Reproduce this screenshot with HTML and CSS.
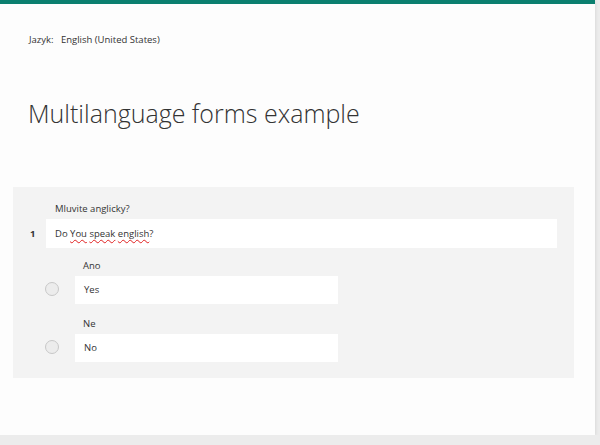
FILE: index.html
```html
<!DOCTYPE html>
<html lang="cs">
<head>
  <meta charset="UTF-8">
  <title>Multilanguage forms example</title>
  <link rel="stylesheet" href="styles.css">
</head>
<body>
  <div class="card">
    <div class="lang">Jazyk:&nbsp;&nbsp; English (United States)</div>

    <h1 class="title">Multilanguage forms example</h1>

    <div class="question">
      <div class="q-label">Mluvite anglicky?</div>
      <div class="q-row">
        <span class="q-num">1</span>
        <div class="q-input">Do <span class="typo">You</span> <span class="typo">speak</span> <span class="typo">english</span>?</div>
      </div>

      <div class="option">
        <div class="opt-label">Ano</div>
        <span class="radio"></span>
        <div class="opt-input">Yes</div>
      </div>

      <div class="option">
        <div class="opt-label">Ne</div>
        <span class="radio"></span>
        <div class="opt-input">No</div>
      </div>
    </div>
  </div>
</body>
</html>
```

FILE: styles.css
```css
body {
  margin: 0;
  background: #ececec;
  font-family: 'Open Sans', 'Noto Sans', sans-serif;
  color: #333;
}

.card {
  width: 595px;
  height: 431px;
  background: #fdfdfd;
  border-top: 4px solid #0b7f6f;
  box-shadow: 0 1px 4px rgba(0, 0, 0, 0.12);
}

.lang {
  padding: 29px 0 0 29px;
  font-size: 9.5px;
  line-height: 14px;
}

.title {
  margin: 48px 0 0 28px;
  font-size: 25px;
  font-weight: 300;
  line-height: 36px;
  color: #333;
}

.question {
  margin: 56px 21px 0 13px;
  padding: 15px 17px 16px 0;
  background: #f3f3f3;
}

.q-label {
  margin-left: 42px;
  font-size: 9.5px;
  line-height: 14px;
  margin-bottom: 3px;
}

.q-row {
  display: flex;
  align-items: center;
}

.q-num {
  width: 33px;
  padding-left: 17px;
  box-sizing: border-box;
  font-size: 9.5px;
  font-weight: 700;
}

.q-input {
  flex: 1;
  height: 29px;
  line-height: 29px;
  padding-left: 9px;
  background: #fff;
  font-size: 9.5px;
}

.typo {
  text-decoration: underline wavy #e02020;
  text-decoration-thickness: 1px;
  text-underline-offset: 2px;
}

.option {
  display: grid;
  grid-template-columns: 62px 263px;
  align-items: center;
  margin-top: 11px;
}

.option + .option {
  margin-top: 13px;
}

.opt-label {
  grid-column: 2;
  padding-left: 8px;
  font-size: 9.5px;
  line-height: 14px;
  margin-bottom: 3px;
}

.radio {
  grid-column: 1;
  justify-self: end;
  margin: 0 16px 3px 0;
  width: 12px;
  height: 12px;
  border-radius: 50%;
  border: 1px solid #c8c8c8;
  background: #ececec;
}

.opt-input {
  grid-column: 2;
  height: 28px;
  line-height: 28px;
  padding-left: 9px;
  background: #fff;
  font-size: 9.5px;
}
```
